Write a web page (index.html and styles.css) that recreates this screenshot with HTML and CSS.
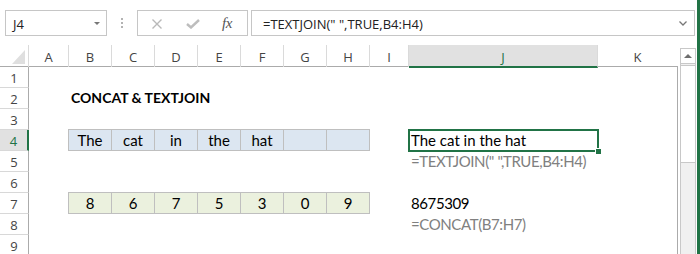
FILE: index.html
```html
<!DOCTYPE html>
<html lang="en">
<head>
    <meta charset="UTF-8">
    <meta name="viewport" content="width=device-width, initial-scale=1.0">
    <title>CONCAT &amp; TEXTJOIN</title>
    <link rel="stylesheet" href="styles.css">
</head>
<body>

<div class="window">

    <!-- formula bar -->
    <div class="formula-bar">
        <div class="name-box">
            <span>J4</span>
            <span class="caret"></span>
        </div>
        <div class="grip"><i></i><i></i><i></i></div>
        <div class="fx-buttons">
            <svg class="btn-icon" width="12" height="10" viewBox="0 0 12 10">
                <path d="M1.5 0.5 L10.5 9.5 M10.5 0.5 L1.5 9.5" stroke="#b9b9b9" stroke-width="1.4" fill="none"/>
            </svg>
            <svg class="btn-icon" width="14" height="10" viewBox="0 0 14 10">
                <path d="M1 5 L5 8.5 L13 1" stroke="#bdbdbd" stroke-width="2.4" fill="none"/>
            </svg>
            <span class="fx">fx</span>
        </div>
        <div class="formula-input">
            <span class="formula-text">=TEXTJOIN(" ",TRUE,B4:H4)</span>
            <svg width="8" height="5" viewBox="0 0 8 5">
                <path d="M0.5 0.5 L4 4 L7.5 0.5" stroke="#777" stroke-width="1.3" fill="none"/>
            </svg>
        </div>
    </div>

    <!-- worksheet -->
    <div class="sheet-area">
        <div class="sheet">
            <div class="row header-row">
                <div class="hc corner"><span class="corner-tri"></span></div>
                <div class="hc">A</div>
                <div class="hc">B</div>
                <div class="hc">C</div>
                <div class="hc">D</div>
                <div class="hc">E</div>
                <div class="hc">F</div>
                <div class="hc">G</div>
                <div class="hc">H</div>
                <div class="hc">I</div>
                <div class="hc selected">J</div>
                <div class="hc last">K</div>
            </div>

            <div class="rows">
                <div class="row">
                    <div class="rh">1</div>
                </div>
                <div class="row">
                    <div class="rh">2</div>
                    <div class="cell title col-b">CONCAT &amp; TEXTJOIN</div>
                </div>
                <div class="row">
                    <div class="rh">3</div>
                </div>
                <div class="row">
                    <div class="rh selected">4</div>
                    <div class="cell word col-b">The</div>
                    <div class="cell word">cat</div>
                    <div class="cell word">in</div>
                    <div class="cell word">the</div>
                    <div class="cell word">hat</div>
                    <div class="cell word"></div>
                    <div class="cell word"></div>
                    <div class="cell col-j active">The cat in the hat</div>
                </div>
                <div class="row">
                    <div class="rh">5</div>
                    <div class="cell col-j formula">=TEXTJOIN(" ",TRUE,B4:H4)</div>
                </div>
                <div class="row">
                    <div class="rh">6</div>
                </div>
                <div class="row">
                    <div class="rh">7</div>
                    <div class="cell digit col-b">8</div>
                    <div class="cell digit">6</div>
                    <div class="cell digit">7</div>
                    <div class="cell digit">5</div>
                    <div class="cell digit">3</div>
                    <div class="cell digit">0</div>
                    <div class="cell digit">9</div>
                    <div class="cell col-j number">8675309</div>
                </div>
                <div class="row">
                    <div class="rh">8</div>
                    <div class="cell col-j formula">=CONCAT(B7:H7)</div>
                </div>
                <div class="row">
                    <div class="rh">9</div>
                </div>
            </div>
        </div>

        <div class="vscroll">
            <div class="scroll-btn"><span class="arrow-up"></span></div>
            <div class="scroll-thumb"></div>
        </div>
    </div>

</div>

</body>
</html>
```

FILE: styles.css
```css
body {
    margin: 0;
    background: #fff;
    font-family: "Open Sans", "Noto Sans", sans-serif;
}

.window {
    width: 697px;
    height: 254px;
    border-right: 3px solid #217346;
    overflow: hidden;
}

/* Formula bar */
.formula-bar {
    display: flex;
    align-items: stretch;
    height: 26px;
    margin-top: 10px;
    padding-left: 5px;
}

.name-box {
    box-sizing: border-box;
    width: 102px;
    border: 1px solid #c6c6c6;
    display: flex;
    align-items: center;
    justify-content: space-between;
    padding: 1px 6px 0 7px;
    font-size: 13px;
    color: #222;
}

.caret {
    width: 0;
    height: 0;
    border-left: 3.5px solid transparent;
    border-right: 3.5px solid transparent;
    border-top: 3.5px solid #777;
}

.grip {
    width: 30px;
    display: flex;
    flex-direction: column;
    align-items: center;
    justify-content: center;
    gap: 2px;
}

.grip i {
    width: 2px;
    height: 2px;
    background: #b3b3b3;
}

.fx-buttons {
    box-sizing: border-box;
    width: 111px;
    border: 1px solid #c6c6c6;
    display: flex;
    align-items: center;
    padding: 1px 0 0 13px;
}

.btn-icon + .btn-icon {
    margin-left: 23px;
}

.fx {
    margin-left: 22px;
    font-family: "Liberation Serif", serif;
    font-style: italic;
    font-size: 15px;
    color: #555;
    letter-spacing: -0.5px;
}

.formula-input {
    box-sizing: border-box;
    width: 444px;
    margin-left: 3px;
    border: 1px solid #c6c6c6;
    display: flex;
    align-items: center;
    justify-content: space-between;
    padding: 1px 7px 0 11px;
    font-size: 13px;
    color: #222;
}

/* Worksheet */
.sheet-area {
    display: flex;
    margin-top: 9px;
}

.sheet {
    width: 678px;
}

.row {
    display: grid;
    grid-template-columns: 29px 40px 43px 43px 43px 43px 43px 43px 43px 39px 189px 79px;
    height: 21px;
}

.header-row {
    box-sizing: border-box;
    height: 22px;
    border-bottom: 1px solid #ababab;
}

.hc {
    border-right: 1px solid #dadada;
    display: flex;
    align-items: center;
    justify-content: center;
    padding-top: 2px;
    font-size: 13px;
    color: #444;
}

.hc.last {
    border-right: none;
}

.hc.selected {
    background: #e1e1e1;
    border-bottom: 2px solid #217346;
    margin-bottom: -1px;
    padding-top: 3px;
    color: #217346;
}

.corner {
    position: relative;
}

.corner-tri {
    position: absolute;
    right: 3px;
    bottom: 3px;
    width: 0;
    height: 0;
    border-left: 13px solid transparent;
    border-bottom: 14px solid #dfdfdf;
}

.rows {
    box-sizing: border-box;
    border-right: 1px solid #ababab;
    width: 678px;
}

.rh {
    border-right: 1px solid #ababab;
    border-bottom: 1px solid #d8d8d8;
    display: flex;
    align-items: center;
    justify-content: center;
    padding-top: 1px;
    font-size: 13px;
    color: #444;
}

.rh.selected {
    background: #e1e1e1;
    border-right: 2px solid #217346;
    color: #217346;
}

/* Cells */
.cell {
    font-family: Lato, "Liberation Sans", sans-serif;
    font-size: 15px;
    line-height: 20px;
    padding: 0 2px;
    white-space: nowrap;
    color: #000;
}

.col-b {
    grid-column: 3;
}

.col-j {
    grid-column: 11;
}

.title {
    font-weight: bold;
    font-size: 14px;
}

.word,
.digit {
    text-align: center;
    border: 1px solid #bfbfbf;
    margin: -1px 0 0 -1px;
    padding: 0;
    line-height: 20px;
}

.word {
    background: #dce6f1;
}

.digit {
    background: #ebf1de;
}

.formula,
.number {
    letter-spacing: -0.4px;
}

.formula {
    color: #808080;
}

.active {
    position: relative;
}

.active::after {
    content: "";
    position: absolute;
    left: -1px;
    top: -1px;
    right: -1px;
    bottom: -1px;
    border: 2px solid #217346;
}

.active::before {
    content: "";
    position: absolute;
    right: -3px;
    bottom: -3px;
    width: 5px;
    height: 5px;
    background: #217346;
    border-left: 1px solid #fff;
    border-top: 1px solid #fff;
    z-index: 1;
}

/* Scrollbar */
.vscroll {
    box-sizing: border-box;
    width: 16px;
    margin: 3px 0 0 2px;
    border: 1px solid #c8c8c8;
    border-bottom: none;
    background: #f0f0f0;
    height: 206px;
}

.scroll-btn {
    height: 14px;
    background: #fff;
    border-bottom: 1px solid #c8c8c8;
    display: flex;
    align-items: center;
    justify-content: center;
}

.arrow-up {
    width: 0;
    height: 0;
    border-left: 4px solid transparent;
    border-right: 4px solid transparent;
    border-bottom: 4px solid #6e6e6e;
}

.scroll-thumb {
    box-sizing: border-box;
    height: 98px;
    margin-top: 1px;
    background: #fff;
    border-top: 1px solid #c8c8c8;
    border-bottom: 1px solid #c8c8c8;
}
```
